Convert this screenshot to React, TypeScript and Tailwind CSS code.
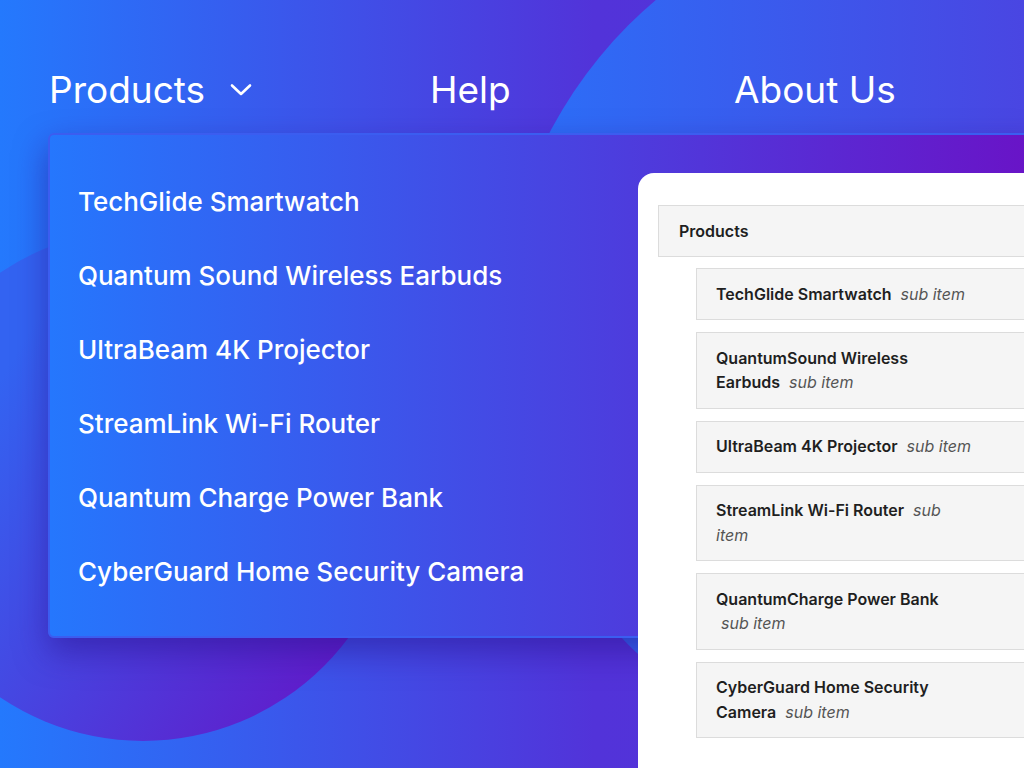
import React from 'react';

const panelItems = [
  'TechGlide Smartwatch',
  'Quantum Sound Wireless Earbuds',
  'UltraBeam 4K Projector',
  'StreamLink Wi-Fi Router',
  'Quantum Charge Power Bank',
  'CyberGuard Home Security Camera',
];

// lines of each sub item as they break in the picture; the last line gets the "sub item" tag
const subItems: { lines: string[]; tagOwnLine?: boolean; tagBreak?: boolean }[] = [
  { lines: ['TechGlide Smartwatch'] },
  { lines: ['QuantumSound Wireless', 'Earbuds'] },
  { lines: ['UltraBeam 4K Projector'] },
  { lines: ['StreamLink Wi-Fi Router'], tagBreak: true },
  { lines: ['QuantumCharge Power Bank'], tagOwnLine: true },
  { lines: ['CyberGuard Home Security', 'Camera'] },
];

const Backdrop: React.FC = () => (
  <svg className="absolute inset-0" width="1024" height="768" viewBox="0 0 1024 768">
    <defs>
      <linearGradient id="bg" gradientUnits="userSpaceOnUse" x1="0" y1="0" x2="1024" y2="0">
        <stop offset="0" stopColor="#2479fd" />
        <stop offset="0.58" stopColor="#5233d9" />
        <stop offset="1" stopColor="#5630d8" />
      </linearGradient>
      <linearGradient id="blobRight" gradientUnits="userSpaceOnUse" x1="500" y1="0" x2="1300" y2="0">
        <stop offset="0" stopColor="#2a71f9" />
        <stop offset="1" stopColor="#5a2fd6" />
      </linearGradient>
      <linearGradient id="blobLeft" gradientUnits="userSpaceOnUse" x1="0" y1="380" x2="400" y2="620">
        <stop offset="0" stopColor="#3363f1" />
        <stop offset="1" stopColor="#6417c8" />
      </linearGradient>
    </defs>
    <rect width="1024" height="768" fill="url(#bg)" />
    <circle cx="938" cy="335" r="438" fill="url(#blobRight)" />
    <circle cx="143" cy="485" r="256" fill="url(#blobLeft)" />
  </svg>
);

const Chevron: React.FC = () => (
  <svg width="22" height="14" viewBox="0 0 22 14" fill="none" stroke="white" strokeWidth="2.6" strokeLinecap="round" strokeLinejoin="round">
    <polyline points="2,2.5 11,11 20,2.5" />
  </svg>
);

const SubTag: React.FC<{ className?: string }> = ({ className = '' }) => (
  <span className={`italic font-normal text-[#555555] ${className}`}>sub item</span>
);

export default function App() {
  return (
    <div className="relative w-[1024px] h-[768px] overflow-hidden font-['Inter',sans-serif]">
      <Backdrop />

      <div className="relative z-10">
        <nav className="h-[133px] pt-[70px] pl-[49px] flex items-start text-white text-[37px] leading-[40px]">
          <div className="w-[381px] h-[40px] flex items-center gap-[25px]">
            <span>Products</span>
            <Chevron />
          </div>
          <div className="w-[304px]">Help</div>
          <div>About Us</div>
        </nav>

        <div className="ml-[48px] w-[1000px] h-[505px] flex rounded-md border-2 border-[#3b5df0] bg-linear-to-r/srgb from-[#2577fd] to-[#6a12c6] shadow-[0_14px_32px_rgba(40,16,140,0.5)]">
          <ul className="w-[588px] shrink-0 pl-[28px] pt-[30px] text-white text-[26px] font-medium leading-[74px]">
            {panelItems.map((item) => (
              <li key={item}>{item}</li>
            ))}
          </ul>

          <div className="mt-[38px] w-[420px] h-[640px] shrink-0 bg-white rounded-tl-2xl pl-[20px] pt-[32px] text-[16px] leading-[24.5px] text-[#1f1f1f]">
            <div className="bg-[#f5f5f5] border border-[#dcdcdc] px-[20px] py-[12.75px] font-semibold">Products</div>
            <div className="ml-[38px] mt-[11px] flex flex-col gap-3">
              {subItems.map((s, i) => (
                <div key={i} className="bg-[#f5f5f5] border border-[#dcdcdc] px-[19px] py-[12.75px] font-semibold">
                  {s.lines.map((line, j) => {
                    const last = j === s.lines.length - 1;
                    return (
                      <div key={j}>
                        {line}
                        {last && !s.tagOwnLine && !s.tagBreak && <SubTag className="ml-[9px]" />}
                        {last && s.tagBreak && <span className="italic font-normal text-[#555555] ml-[9px]">sub</span>}
                      </div>
                    );
                  })}
                  {s.tagBreak && <div className="italic font-normal text-[#555555]">item</div>}
                  {s.tagOwnLine && <SubTag className="block pl-[5px]" />}
                </div>
              ))}
            </div>
          </div>
        </div>
      </div>
    </div>
  );
}
